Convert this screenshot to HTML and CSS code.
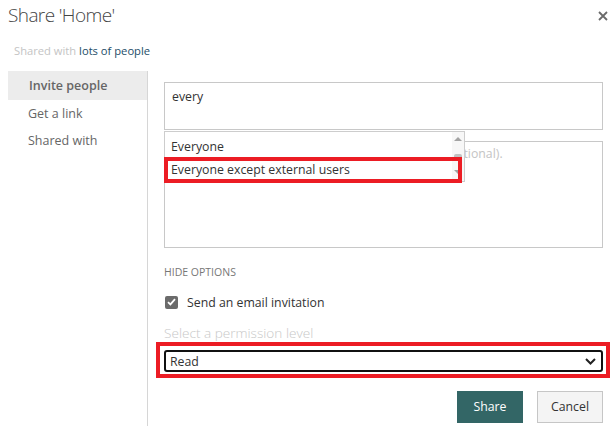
FILE: index.html
```html
<!doctype html>
<html>
	<head>
		<title>Share 'Home'</title>
		<meta charset="utf-8">
		<link rel="stylesheet" href="styles.css">
	</head>
	<body>
		<div class="title">Share 'Home'</div>
		<div class="close">
			<svg width="10" height="10" viewBox="0 0 10 10"><path d="M1 1L9 9M9 1L1 9" stroke="#6a6a6a" stroke-width="1.8"/></svg>
		</div>
		<div class="subtitle"><span class="muted">Shared with</span> <span class="link">lots of people</span></div>

		<div class="main">
			<div class="nav">
				<div class="navItem active">Invite people</div>
				<div class="navItem">Get a link</div>
				<div class="navItem">Shared with</div>
			</div>

			<div class="content">
				<div class="peopleBox">every</div>
				<div class="messageBox">Include a personal message with this invitation (Optional).</div>

				<!-- autocomplete list over the message box -->
				<div class="suggest">
					<div class="suggestItem">Everyone</div>
					<div class="suggestItem">Everyone except external users</div>
					<div class="scroll">
						<span class="arrUp"></span>
						<span class="thumb"></span>
						<span class="arrDown"></span>
					</div>
				</div>
				<div class="mark markSuggest"></div>

				<div class="hideOptions">HIDE OPTIONS</div>
				<div class="checkRow">
					<span class="check">
						<svg width="9" height="8" viewBox="0 0 9 8"><path d="M1 4.2L3.4 6.4L8 1.2" fill="none" stroke="#fff" stroke-width="1.8"/></svg>
					</span>
					Send an email invitation
				</div>
				<div class="permLabel">Select a permission level</div>
				<div class="selectWrap">
					<div class="select">
						<span>Read</span>
						<svg width="11" height="7" viewBox="0 0 11 7"><path d="M1 1L5.5 5.5L10 1" fill="none" stroke="#222" stroke-width="2"/></svg>
					</div>
					<div class="mark markSelect"></div>
				</div>
				<div class="buttons">
					<div class="btn share">Share</div>
					<div class="btn cancel">Cancel</div>
				</div>
			</div>
		</div>
	</body>
</html>
```

FILE: styles.css
```css
body{
	margin:0px;
	padding:0px;
	background:#fff;
	font-family:"Open Sans","Noto Sans",sans-serif;
	color:#333;
	position:relative;
	height:426px;
	overflow:hidden;
}

/** header **/
.title{
	padding:1px 8px 0;
	height:29px;
	font-size:19px;
	line-height:28px;
	letter-spacing:-0.6px;
	font-weight:300;
	color:#444;
}
.close{
	position:absolute;
	top:4px;
	left:598px;
}
.subtitle{
	padding:14px 14px 0;
	height:14px;
	margin-bottom:13px;
	font-size:11.2px;
	line-height:14px;
}
.muted{ color:#c4c4c4; }
.link{ color:#1d4d68; }

/** body row **/
.main{
	display:flex;
	height:355px;
}
.nav{
	width:139px;
	margin-left:8px;
	border-right:1px solid #d6d6d6;
}
.navItem{
	height:27px;
	line-height:27px;
	padding-left:20px;
	font-size:12.5px;
	color:#666;
}
.navItem.active{
	height:29px;
	line-height:29px;
	background:#ececec;
	font-weight:600;
	padding-left:21px;
}

.content{
	position:relative;
	flex:1;
	padding:11px 12px 0 16px;
	font-size:12.3px;
}
.peopleBox{
	height:46px;
	border:1px solid #c8c8c8;
	padding:0 7px;
	line-height:27px;
	color:#333;
}
.messageBox{
	margin-top:11px;
	height:101px;
	border:1px solid #c8c8c8;
	padding:2px 7px;
	line-height:20px;
	color:#c4c4c4;
	white-space:nowrap;
	overflow:hidden;
}

.suggest{
	position:absolute;
	left:16px;
	top:60px;
	width:301px;
	height:51px;
	box-sizing:border-box;
	border:1px solid #cdcdcd;
	background:#fff;
	padding-top:3px;
}
.suggestItem{
	height:23px;
	line-height:23px;
	padding-left:6px;
	color:#333;
}
.scroll{
	position:absolute;
	right:0;
	top:0;
	width:12px;
	height:49px;
	background:#f7f7f7;
}
.arrUp{
	position:absolute;
	left:2px;
	top:5px;
	border-left:4px solid transparent;
	border-right:4px solid transparent;
	border-bottom:4px solid #a3a3a3;
}
.thumb{
	position:absolute;
	left:2px;
	top:22px;
	width:8px;
	height:6px;
	border-radius:2px;
	background:#c2c2c2;
}
.arrDown{
	position:absolute;
	left:2px;
	top:38px;
	border-left:4px solid transparent;
	border-right:4px solid transparent;
	border-top:4px solid #a3a3a3;
}

/** red annotation boxes **/
.mark{
	position:absolute;
	border:4px solid #ec1c24;
	box-sizing:border-box;
}
.markSuggest{
	left:16px;
	top:86px;
	width:298px;
	height:26px;
}

.hideOptions{
	margin-top:17px;
	font-size:10.5px;
	line-height:14px;
	color:#777;
}
.checkRow{
	margin-top:13px;
	display:flex;
	align-items:center;
	height:20px;
	color:#333;
}
.check{
	display:flex;
	align-items:center;
	justify-content:center;
	width:13px;
	height:13px;
	margin-left:1px;
	margin-right:9px;
	border-radius:2px;
	background:#6b6b6b;
}
.permLabel{
	margin-top:12px;
	font-size:13.6px;
	line-height:18px;
	font-weight:300;
	color:#c8c8c8;
}
.selectWrap{
	position:relative;
	margin-top:8px;
}
.select{
	height:22px;
	box-sizing:border-box;
	border:2px solid #111;
	border-radius:3px;
	display:flex;
	align-items:center;
	justify-content:space-between;
	padding:0 5px 0 4px;
	color:#333;
}
.markSelect{
	left:-8px;
	top:-8px;
	right:-7px;
	bottom:-6px;
}

.buttons{
	margin-top:19px;
	display:flex;
	justify-content:flex-end;
	gap:14px;
}
.btn{
	width:66px;
	height:32px;
	box-sizing:border-box;
	line-height:30px;
	text-align:center;
}
.share{
	background:#336666;
	color:#fff;
	border:1px solid #336666;
}
.cancel{
	background:#f4f4f4;
	color:#333;
	border:1px solid #c6c6c6;
}
```
